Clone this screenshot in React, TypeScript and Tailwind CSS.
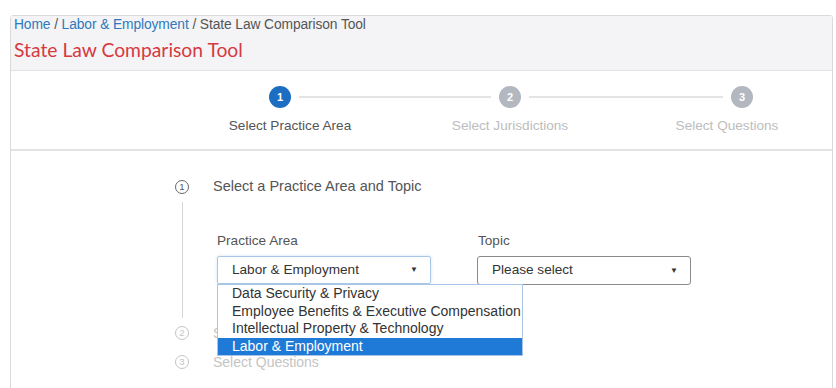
import React from "react";

const Circled = ({ n, color }: { n: number; color: string }) => (
  <div
    className={`w-[14px] h-[14px] rounded-full border-[1.4px] flex items-center justify-center text-[9.5px] leading-none ${color}`}
    style={{ fontFamily: '"Liberation Sans", Arial, sans-serif' }}
  >
    {n}
  </div>
);

const StepCircle = ({ n, active }: { n: number; active?: boolean }) => (
  <div
    className={`w-[22px] h-[22px] rounded-full flex items-center justify-center text-white text-[11px] font-bold shrink-0 ${
      active ? "bg-[#1b6ec2]" : "bg-[#b3b8c0]"
    }`}
  >
    {n}
  </div>
);

export default function App() {
  const options = [
    "Data Security & Privacy",
    "Employee Benefits & Executive Compensation",
    "Intellectual Property & Technology",
    "Labor & Employment",
  ];
  return (
    <div
      className="w-[836px] h-[388px] overflow-hidden bg-white pt-[15px] pl-[10px]"
      style={{ fontFamily: '"Liberation Sans", Arial, sans-serif' }}
    >
      <div className="w-[823px] h-[420px] border border-[#dadada] rounded-[3px]">
        {/* header */}
        <div className="h-[55px] bg-[#f4f4f6] border-b border-[#e2e2e2] pl-[3px] pt-[1px]">
          <div className="text-[13.8px] leading-[16px] text-[#555] tracking-[-0.1px]">
            <span className="text-[#2f78bd]">Home</span> /{" "}
            <span className="text-[#2f78bd]">Labor &amp; Employment</span> / State Law Comparison Tool
          </div>
          <div
            className="mt-[5px] text-[19.3px] leading-[23px] text-[#d63a40]"
            style={{ fontFamily: "Lato, sans-serif" }}
          >
            State Law Comparison Tool
          </div>
        </div>

        {/* top stepper */}
        <div className="h-[80px] border-b-2 border-[#e3e3e3] pt-[15px]">
          <div className="flex items-center pl-[258px]">
            <StepCircle n={1} active />
            <div className="mx-[8px] w-[192px] h-[2px] bg-[#e4e4e4]" />
            <StepCircle n={2} />
            <div className="mx-[8px] w-[194px] h-[2px] bg-[#e4e4e4]" />
            <StepCircle n={3} />
          </div>
          <div className="flex mt-[9px] text-[13.6px] leading-[17px] whitespace-nowrap">
            <div className="ml-[212px] w-[134px] text-center text-[#555]">Select Practice Area</div>
            <div className="ml-[90px] w-[126px] text-center text-[#bdbdbd]">Select Jurisdictions</div>
            <div className="ml-[96px] w-[116px] text-center text-[#bdbdbd]">Select Questions</div>
          </div>
        </div>

        {/* vertical stepper */}
        <div className="pl-[164px] pt-[26px]">
          {/* row 1 */}
          <div className="flex">
            <div className="w-[14px] flex flex-col items-center pt-[3px]">
              <Circled n={1} color="border-[#666] text-[#555]" />
              <div className="w-px flex-1 bg-[#d6d6d6] mt-[8px] mb-[6px]" />
            </div>
            <div className="ml-[24px]">
              <div className="text-[14.5px] leading-[19px] text-[#555]">Select a Practice Area and Topic</div>
              <div className="flex ml-[4px] mt-[36px] pb-[39px]">
                <div className="relative w-[214px]">
                  <div className="text-[13.6px] leading-[17px] text-[#555]">Practice Area</div>
                  <div className="mt-[7px] h-[28px] border border-[#a9c8e8] rounded-[2px] flex items-center justify-between pl-[14px] pr-[12px] text-[13.6px] text-[#333] shadow-[0_0_3px_rgba(120,170,230,0.35)]">
                    <span>Labor &amp; Employment</span>
                    <span className="text-[8px] text-[#333]">▼</span>
                  </div>
                  <div className="absolute left-0 top-[52px] w-[306px] bg-white border border-[#a8c5e6] z-10">
                    {options.map((o, i) => (
                      <div
                        key={o}
                        className={`pl-[14px] h-[17.5px] leading-[17.5px] text-[14px] whitespace-nowrap ${
                          i === 3 ? "bg-[#1f79d6] text-white" : "text-[#333]"
                        }`}
                      >
                        {o}
                      </div>
                    ))}
                  </div>
                </div>
                <div className="ml-[46px] w-[214px]">
                  <div className="ml-[1px] text-[13.6px] leading-[17px] text-[#555]">Topic</div>
                  <div className="mt-[7px] h-[29px] border border-[#8a8a8a] rounded-[3px] flex items-center justify-between pl-[14px] pr-[12px] text-[13.6px] text-[#333]">
                    <span>Please select</span>
                    <span className="text-[8px] text-[#333]">▼</span>
                  </div>
                </div>
              </div>
            </div>
          </div>
          {/* row 2 */}
          <div className="flex items-center h-[18px]">
            <div className="w-[14px] flex justify-center">
              <Circled n={2} color="border-[#c4c4c4] text-[#c4c4c4]" />
            </div>
            <div className="ml-[24px] text-[14px] leading-[18px] text-[#c4c4c4]">Select Jurisdictions</div>
          </div>
          {/* row 3 */}
          <div className="flex items-center h-[18px] mt-[11px]">
            <div className="w-[14px] flex justify-center">
              <Circled n={3} color="border-[#c4c4c4] text-[#c4c4c4]" />
            </div>
            <div className="ml-[24px] text-[14px] leading-[18px] text-[#c4c4c4]">Select Questions</div>
          </div>
        </div>
      </div>
    </div>
  );
}
